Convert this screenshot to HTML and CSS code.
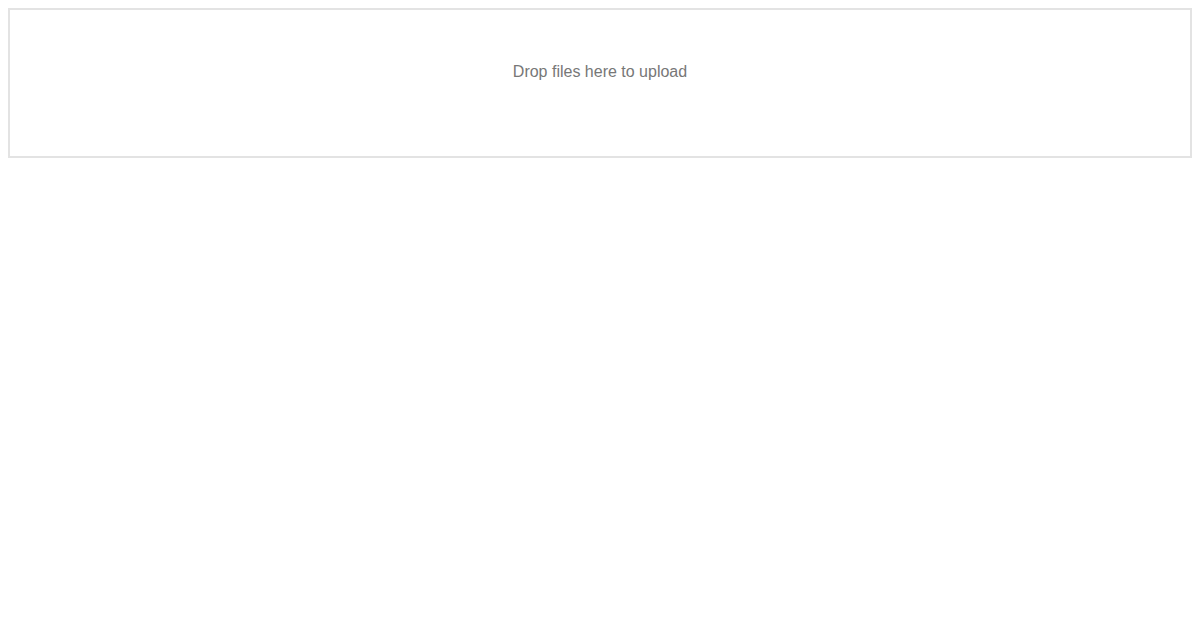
FILE: index.html
```html
<!DOCTYPE html>
<html lang="en">
<head>
	<meta charset="UTF-8">
	<title>upload</title>
	<link rel="stylesheet" href="styles.css">
</head>
<body>
	<form class="dropzone" action="#">
		<div class="dz-message">Drop files here to upload</div>
	</form>
</body>
</html>
```

FILE: styles.css
```css
body {
	margin: 8px;
	font-family: "Liberation Sans", Arial, sans-serif;
	background: #fff;
}

.dropzone {
	box-sizing: border-box;
	min-height: 150px;
	border: 2px solid #e3e3e3;
	padding: 20px;
	background: #fff;
}

.dropzone .dz-message {
	text-align: center;
	margin: 2em 0;
	font-size: 16px;
	line-height: 20px;
	color: #777;
}
```
